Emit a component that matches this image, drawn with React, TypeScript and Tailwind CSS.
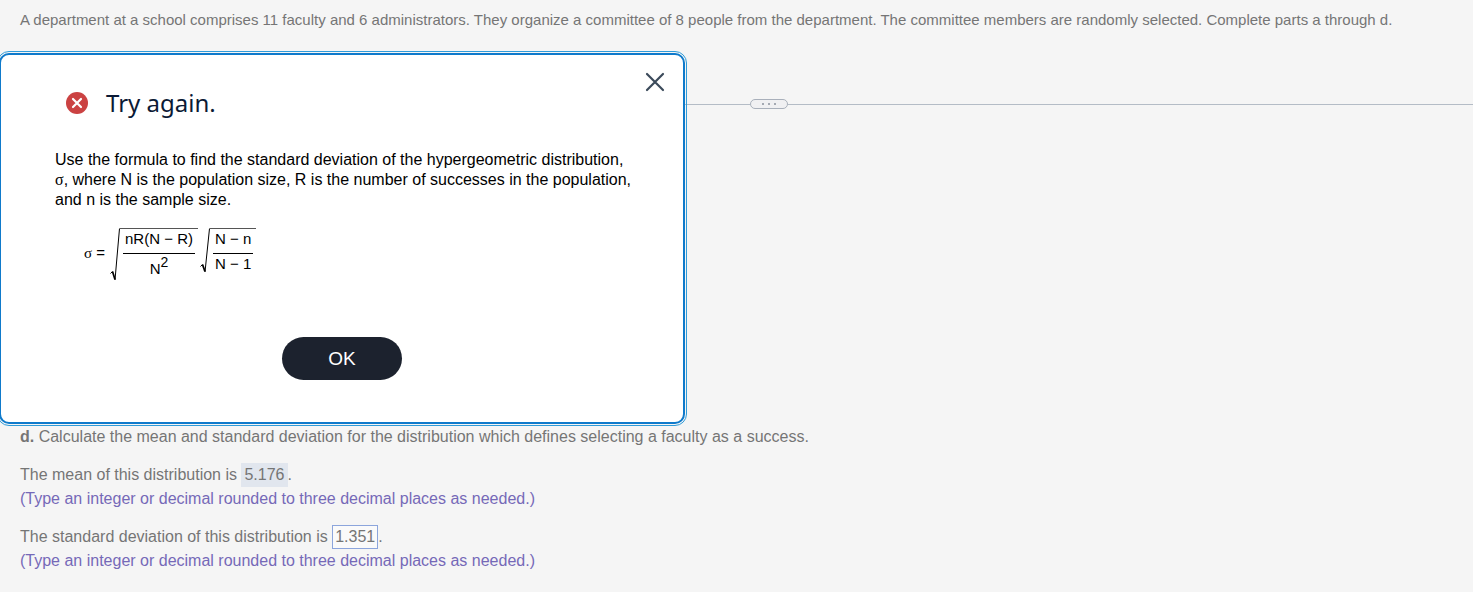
import React from 'react';

const Radical: React.FC<{ tall?: boolean }> = ({ tall }) => (
  <svg
    aria-hidden="true"
    className={tall ? 'h-[53px] w-[10px]' : 'h-[45px] w-[10px]'}
    viewBox={tall ? '0 0 10 53' : '0 0 10 45'}
    fill="none"
    stroke="#000"
  >
    {tall ? (
      <>
        <path d="M0.5 45.5 L2.5 43.5" strokeWidth="1" />
        <path d="M2.5 43.5 L5 51.5" strokeWidth="1.8" />
        <path d="M5 52 L9.5 0.5" strokeWidth="1" />
      </>
    ) : (
      <>
        <path d="M0.5 38.5 L2.5 36.5" strokeWidth="1" />
        <path d="M2.5 36.5 L5 43.5" strokeWidth="1.8" />
        <path d="M5 44 L9.5 0.5" strokeWidth="1" />
      </>
    )}
  </svg>
);

const Formula: React.FC = () => (
  <div className="mt-[18px] ml-[35px] flex items-start text-[15px] leading-5">
    <span className="mt-[15px] mr-[5px]">
      <span className="font-['Liberation_Serif',serif]">σ</span> =
    </span>
    <Radical tall />
    <div className="border-t border-[#555] px-[3px] text-center">
      <div className="border-b border-black px-[2px] pb-[4px]">nR(N − R)</div>
      <div className="pt-[5px]">
        N<sup className="text-sm">2</sup>
      </div>
    </div>
    <div className="ml-[2px] flex">
      <Radical />
      <div className="border-t border-[#555] px-[3px] text-center">
        <div className="border-b border-black px-[2px] pb-[4px]">N − n</div>
        <div>N − 1</div>
      </div>
    </div>
  </div>
);

const FeedbackDialog: React.FC = () => (
  <div
    role="dialog"
    aria-labelledby="feedback-title"
    className="absolute top-[53px] -left-px w-[686px] rounded-[10px] border-2 border-[#0f7acb] bg-white px-12 pt-[33px] pb-[42px] text-black outline outline-offset-1 outline-[#2f9bd8]"
  >
    <button type="button" aria-label="Close" className="absolute top-[16px] right-[17px] p-px">
      <svg className="size-[20px]" viewBox="0 0 20 20" fill="none" stroke="#3b4a5a" strokeWidth="2.2">
        <path d="M2 2 L18 18 M18 2 L2 18" strokeLinecap="round" />
      </svg>
    </button>
    <div className="flex items-center gap-[18px] pl-[17px]">
      <svg aria-hidden="true" className="size-[22px]" viewBox="0 0 22 22">
        <circle cx="11" cy="11" r="11" fill="#cb4242" />
        <path d="M7 7 L15 15 M15 7 L7 15" stroke="#fff" strokeWidth="2.2" strokeLinecap="round" />
      </svg>
      <h2
        id="feedback-title"
        className="font-['Noto_Sans',sans-serif] text-2xl leading-[30px] text-[#0b1a35]"
      >
        Try again.
      </h2>
    </div>
    <p className="mt-[32px] pl-[6px] leading-5">
      Use the formula to find the standard deviation of the hypergeometric distribution,{' '}
      <span className="font-['Liberation_Serif',serif]">σ</span>, where N is the population size, R
      is the number of successes in the population, and n is the sample size.
    </p>
    <Formula />
    <button
      type="button"
      className="mx-auto mt-[56px] block h-[43px] w-[120px] rounded-full bg-[#1c222e] text-[19px] text-white"
    >
      OK
    </button>
  </div>
);

const Divider: React.FC = () => (
  <div className="mt-[67px] flex items-center pl-16">
    <div className="h-px flex-1 bg-[#b4bcc6]" />
    <button
      type="button"
      aria-label="Resize panels"
      className="flex h-[10px] w-[38px] items-center justify-center gap-1 rounded-full border border-[#a9b0bb] bg-[#f0f0f2]"
    >
      <span className="size-[2px] bg-[#a4a9b2]" />
      <span className="size-[2px] bg-[#a4a9b2]" />
      <span className="size-[2px] bg-[#a4a9b2]" />
    </button>
    <div className="h-px flex-1 bg-[#b4bcc6]" />
  </div>
);

const Hint: React.FC = () => (
  <p className="text-[#7569b8]">(Type an integer or decimal rounded to three decimal places as needed.)</p>
);

const App: React.FC = () => {
  return (
    <main className="relative min-h-screen bg-[#f5f5f5] pb-5 font-['Liberation_Sans',Arial,sans-serif] text-base leading-6 text-[#757575]">
      <p className="pt-2 pl-5 text-[15px] leading-6">
        A department at a school comprises 11 faculty and 6 administrators. They organize a committee
        of 8 people from the department. The committee members are randomly selected. Complete parts
        a through d.
      </p>
      <Divider />
      <section className="mt-[316px] pl-5">
        <p>
          <b>d.</b> Calculate the mean and standard deviation for the distribution which defines
          selecting a faculty as a success.
        </p>
        <div className="mt-[14px]">
          <p>
            The mean of this distribution is{' '}
            <span className="inline-block bg-[#e1e6ee] px-[3px]">5.176</span>.
          </p>
          <Hint />
        </div>
        <div className="mt-[14px]">
          <label htmlFor="deviation">The standard deviation of this distribution is </label>
          <input
            id="deviation"
            defaultValue="1.351"
            className="h-6 w-[46px] border border-[#8ca5dc] bg-[#fafafa] px-[2px] align-bottom"
          />
          .
          <Hint />
        </div>
      </section>
      <FeedbackDialog />
    </main>
  );
};

export default App;
